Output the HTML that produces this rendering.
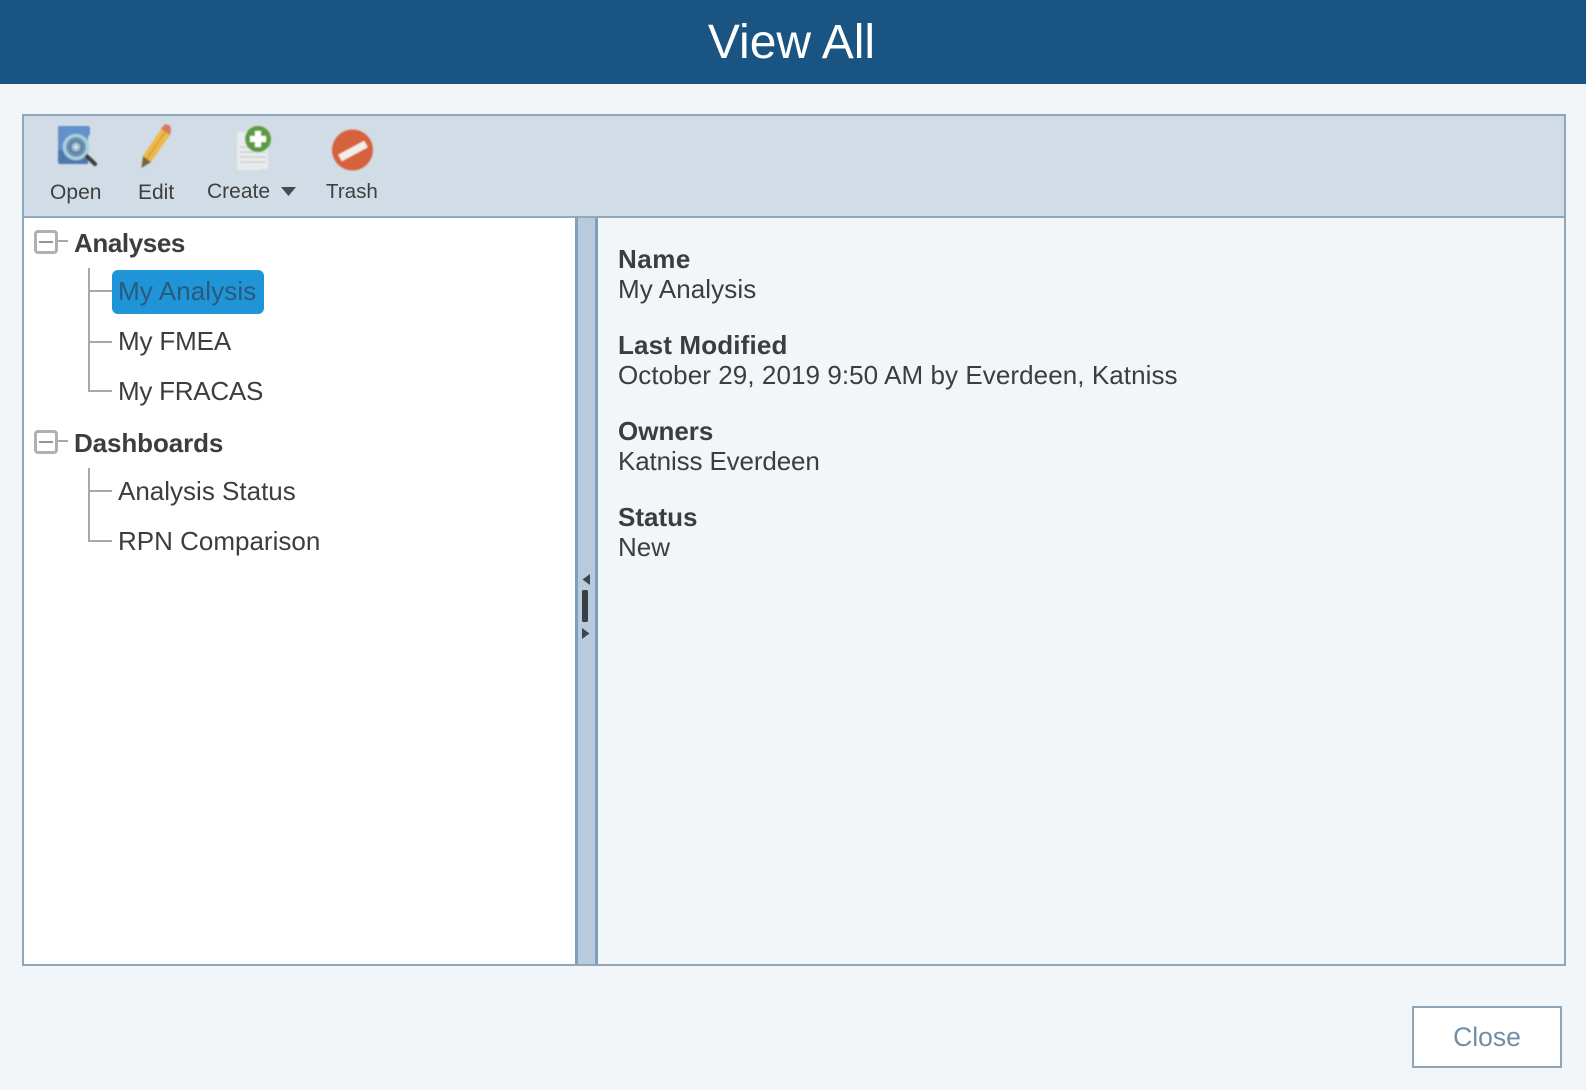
<!DOCTYPE html>
<html><head><meta charset="utf-8"><title>View All</title>
<style>
html,body{margin:0;padding:0;width:1586px;height:1090px;overflow:hidden;background:#f2f6f9}
body{position:relative;font-family:"Liberation Sans",sans-serif;color:#3d3d3d}
.a{position:absolute;box-sizing:border-box}
.t{position:absolute;white-space:nowrap;line-height:30px;height:30px;font-size:26px}
.b{font-weight:bold}
.s{position:absolute;white-space:nowrap;line-height:26px;height:26px;font-size:21px;color:#3f3f3f}
.l{position:absolute;background:#a8a8a8}
.tog{position:absolute;box-sizing:border-box;width:24px;height:24px;border:3px solid #b0b0b0;border-radius:4px;background:#fff}
.tog i{position:absolute;left:2px;right:2px;top:8px;height:2px;background:#949494}
</style></head>
<body>
<div class="a" style="left:0;top:0;width:1586px;height:84px;background:#195482"></div>
<div class="a" style="left:0;top:15px;width:1583px;text-align:center;color:#fff;font-size:48px;line-height:56px">View All</div>

<div class="a" style="left:22px;top:114px;width:1544px;height:852px;background:#f2f6f9;border:2px solid #8fa8bc"></div>
<div class="a" style="left:24px;top:116px;width:1540px;height:102px;background:#d2dce7;border-bottom:2px solid #8fa8bc"></div>
<div class="a" style="left:24px;top:218px;width:551px;height:746px;background:#fff"></div>
<div class="a" style="left:575px;top:218px;width:23px;height:746px;background:#b7cbdc;border-left:3px solid #7f9fbc;border-right:3px solid #7f9fbc"></div>

<svg class="a" style="left:570px;top:570px" width="30" height="75" viewBox="570 570 30 75">
<path d="M590 574v11l-7.500-5.500z" fill="#3d4650"/>
<rect x="582" y="590" width="6" height="32" rx="1.500" fill="#3a3f46"/>
<path d="M582 628v11l7.500-5.500z" fill="#3d4650"/>
</svg>

<svg class="a" style="left:40px;top:118px" width="340" height="60" viewBox="40 118 340 60">
<defs><filter id="f" x="-10%" y="-10%" width="120%" height="120%"><feGaussianBlur stdDeviation="0.7"/></filter></defs>
<g filter="url(#f)">
<path d="M59 126H89L90 128V134L88 137V164H60L58 163V127Z" fill="#6491c9"/>
<path d="M58 150H88V164H60L58 163Z" fill="#5079ad"/>
<circle cx="76" cy="147" r="11.500" fill="#6a8fae" stroke="#a9cfdb" stroke-width="3.500"/>
<circle cx="76" cy="147" r="5.500" fill="#9abbd4" stroke="#557796" stroke-width="1.500"/>
<path d="M73.500 147h5M76 144.500v5" stroke="#e8f0f5" stroke-width="1.200"/>
<path d="M87 156.500L95 164" stroke="#3d3d3d" stroke-width="4" stroke-linecap="round"/>
<path d="M143 156L161 129L170 135L151 162Z" fill="#eeb94a"/>
<path d="M143 156L151 162L141.500 168Z" fill="#7a6442"/>
<path d="M161 129L164 125Q167 123 170 126Q172 130 170 135Z" fill="#d77a5a"/>
<path d="M147 159L165 132" stroke="#d49c34" stroke-width="1.500"/>
<path d="M237 132H262V168L260 170H237Z" fill="#e8ecec"/>
<rect x="240" y="140" width="28" height="29" fill="#e8ecec"/>
<path d="M240 147h10M240 152h26M240 157h26M240 162h26" stroke="#c9cfd1" stroke-width="1.500"/>
<circle cx="258" cy="139" r="13" fill="#5a9c3c"/>
<path d="M258 131v16M250 139h16" stroke="#fff" stroke-width="6"/>
<circle cx="352.500" cy="150" r="20.500" fill="#d6623d"/>
<path d="M340 158L366 144" stroke="#f4ede6" stroke-width="7.500"/>
</g>
</svg>

<div class="s" style="left:50px;top:180px;letter-spacing:.03px">Open</div>
<div class="s" style="left:138px;top:180px">Edit</div>
<div class="s" style="left:207px;top:179px">Create</div>
<svg class="a" style="left:280px;top:186px" width="17" height="11"><path d="M1 1H16L8.500 10Z" fill="#4a4a4a"/></svg>
<div class="s" style="left:326px;top:179px;font-size:20.600px">Trash</div>

<div class="tog" style="left:34px;top:230px"><i></i></div>
<div class="l" style="left:58px;top:240px;width:10px;height:1.500px"></div>
<div class="t b" style="left:74px;top:228px;letter-spacing:-.4px">Analyses</div>
<div class="l" style="left:88px;top:268px;width:1.500px;height:124px"></div>
<div class="l" style="left:89px;top:290px;width:23px;height:1.500px"></div>
<div class="l" style="left:89px;top:341px;width:23px;height:1.500px"></div>
<div class="l" style="left:89px;top:390px;width:23px;height:1.500px"></div>
<div class="a" style="left:112px;top:270px;width:152px;height:44px;background:#1f94d6;border-radius:6px"></div>
<div class="t" style="left:118px;top:276px;color:#2b5a7c;letter-spacing:.1px">My Analysis</div>
<div class="t" style="left:118px;top:326px;letter-spacing:-.15px">My FMEA</div>
<div class="t" style="left:118px;top:376px;letter-spacing:-.25px">My FRACAS</div>

<div class="tog" style="left:34px;top:430px"><i></i></div>
<div class="l" style="left:58px;top:440px;width:10px;height:1.500px"></div>
<div class="t b" style="left:74px;top:428px;letter-spacing:-.1px">Dashboards</div>
<div class="l" style="left:88px;top:468px;width:1.500px;height:74px"></div>
<div class="l" style="left:89px;top:490px;width:23px;height:1.500px"></div>
<div class="l" style="left:89px;top:540px;width:23px;height:1.500px"></div>
<div class="t" style="left:118px;top:476px">Analysis Status</div>
<div class="t" style="left:118px;top:526px">RPN Comparison</div>

<div class="t b" style="left:618px;top:244px;letter-spacing:.5px">Name</div>
<div class="t" style="left:618px;top:274px;letter-spacing:.1px">My Analysis</div>
<div class="t b" style="left:618px;top:330px;letter-spacing:.15px">Last Modified</div>
<div class="t" style="left:618px;top:360px;letter-spacing:.07px">October 29, 2019 9:50 AM by Everdeen, Katniss</div>
<div class="t b" style="left:618px;top:416px">Owners</div>
<div class="t" style="left:618px;top:446px;letter-spacing:-.13px">Katniss Everdeen</div>
<div class="t b" style="left:618px;top:502px">Status</div>
<div class="t" style="left:618px;top:532px">New</div>

<div class="a" style="left:1412px;top:1006px;width:150px;height:62px;background:#fff;border:2px solid #8fa6b8;color:#6f8ea8;font-size:26.500px;line-height:58px;text-align:center">Close</div>
</body></html>
